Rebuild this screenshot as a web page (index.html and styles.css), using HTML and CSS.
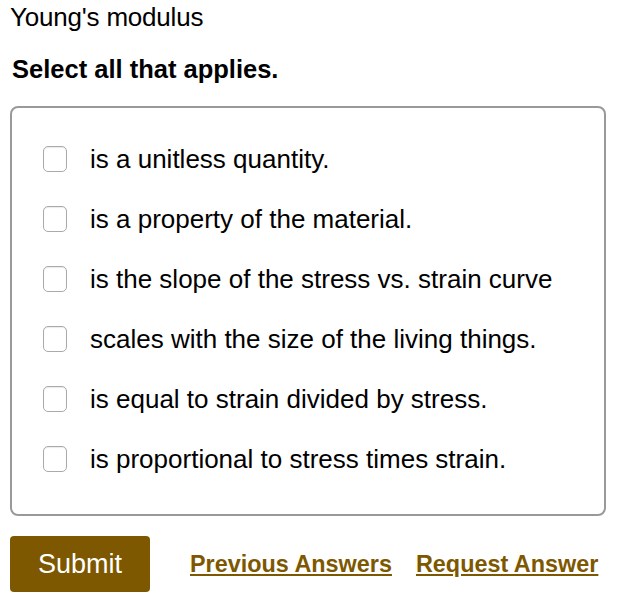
FILE: index.html
```html
<!DOCTYPE html>
<html>
<head>
<meta charset="utf-8">
<link rel="stylesheet" href="styles.css">
</head>
<body>
<div class="page">
  <p class="title">Young's modulus</p>
  <p class="prompt">Select all that applies.</p>
  <div class="box">
    <label class="opt"><span class="cb"></span><span>is a unitless quantity.</span></label>
    <label class="opt"><span class="cb"></span><span>is a property of the material.</span></label>
    <label class="opt"><span class="cb"></span><span>is the slope of the stress vs. strain curve</span></label>
    <label class="opt"><span class="cb"></span><span>scales with the size of the living things.</span></label>
    <label class="opt"><span class="cb"></span><span>is equal to strain divided by stress.</span></label>
    <label class="opt"><span class="cb"></span><span>is proportional to stress times strain.</span></label>
  </div>
  <div class="actions">
    <button class="submit">Submit</button>
    <a class="link" href="#">Previous Answers</a>
    <a class="link" href="#">Request Answer</a>
  </div>
</div>
</body>
</html>
```
FILE: styles.css
```css
html, body { margin: 0; padding: 0; background: #fff; }
body { font-family: "Liberation Sans", Arial, sans-serif; color: #000; }
.page { padding: 0 10px; width: 596px; }
.title { margin: 0; padding-top: 3px; font-size: 26px; line-height: 28px; letter-spacing: -0.2px; }
.prompt { margin: 24px 0 0 2px; font-size: 25.5px; font-weight: bold; line-height: 28px; }
.box {
  margin-top: 23px;
  border: 2px solid #999;
  border-radius: 8px;
  padding: 21px 0 25px 31px;
  display: flex; flex-direction: column;
}
.opt { display: flex; align-items: center; height: 60px; font-size: 26px; }
.cb {
  width: 22px; height: 24px;
  border: 1px solid #aaa; border-radius: 5px;
  margin-right: 23px; background: #fff;
  box-shadow: inset 0 1px 1px rgba(0,0,0,0.08);
}
.actions { display: flex; align-items: center; margin-top: 20px; }
.submit {
  background: #7d5800; color: #fff; border: none; border-radius: 4px;
  width: 140px; height: 56px; font-family: inherit; font-size: 27px; padding: 0;
}
.link { color: #7d5800; font-weight: bold; font-size: 23.4px; text-decoration: underline; margin-left: 40px; }
.link + .link { margin-left: 24px; }
```
